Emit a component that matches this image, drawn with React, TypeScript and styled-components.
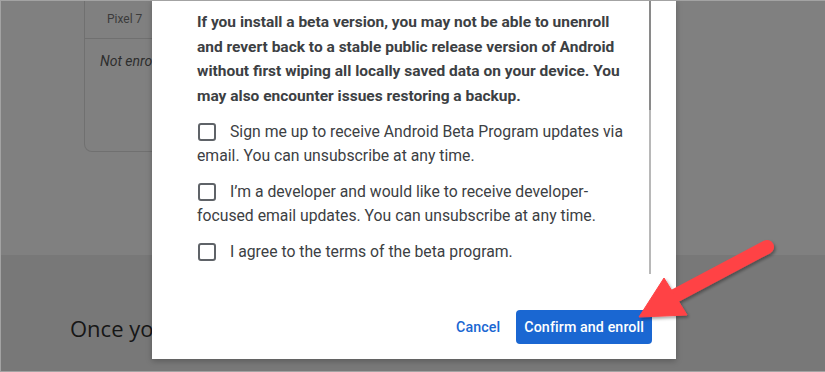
import React from 'react';
import styled, { createGlobalStyle } from 'styled-components';

const Global = createGlobalStyle`
  html, body {
    margin: 0;
    padding: 0;
  }
  body {
    font-family: Roboto, 'Liberation Sans', sans-serif;
  }
`;

// whole screenshot, dimmed page behind the modal
const Frame = styled.div`
  position: relative;
  width: 825px;
  height: 372px;
  box-sizing: border-box;
  overflow: hidden;
  border-top: 1px solid #a3a3a3;
  border-left: 1px solid #a3a3a3;
  border-bottom: 1px solid #a3a3a3;
  display: flex;
  flex-direction: column;
  background: #787878;
`;

const TopSection = styled.div`
  height: 254px;
  background: #808080;
  padding-left: 83px;
  box-sizing: border-box;
`;

const DeviceCard = styled.div`
  width: 200px;
  height: 152px;
  margin-top: -1px;
  border: 1px solid #707070;
  border-top: none;
  border-radius: 0 0 8px 8px;
  box-sizing: border-box;
`;

const CardHead = styled.div`
  height: 38px;
  border-bottom: 1px solid #707070;
  display: flex;
  align-items: center;
  padding-left: 22px;
  font-size: 12px;
  color: #3b3b3b;
`;

const CardBody = styled.div`
  padding: 14px 0 0 15px;
  font-size: 14px;
  font-style: italic;
  color: #2e2e2e;
`;

const BottomSection = styled.div`
  flex: 1;
  padding: 58px 0 0 69px;
`;

const Heading = styled.h2`
  margin: 0;
  font-family: 'Open Sans', Roboto, sans-serif;
  font-weight: 400;
  font-size: 22px;
  color: #161616;
`;

// the modal dialog
const Dialog = styled.div`
  position: absolute;
  left: 151px;
  top: -1px;
  width: 524px;
  height: 359px;
  background: #fff;
  box-shadow: 0 2px 6px rgba(0, 0, 0, 0.25);
  display: flex;
  flex-direction: column;
`;

const ScrollArea = styled.div`
  height: 274px;
  display: flex;
`;

const Content = styled.div`
  width: 497px;
  box-sizing: border-box;
  padding: 10px 18px 0 45px;
`;

const Track = styled.div`
  width: 2px;
  background: #b8b8b8;
  display: flex;
  flex-direction: column;
`;

const Thumb = styled.div`
  height: 110px;
  background: #8a8a8a;
`;

const Warning = styled.p`
  margin: 0 0 12px;
  font-size: 15.5px;
  line-height: 24.5px;
  font-weight: 700;
  color: #3c4043;
`;

const Option = styled.label`
  display: block;
  margin: 0 0 12px;
  font-size: 15.75px;
  line-height: 24px;
  color: #3c4043;
`;

const Box = styled.span`
  display: inline-block;
  width: 18px;
  height: 18px;
  box-sizing: border-box;
  border: 2px solid #5f6368;
  border-radius: 3px;
  margin: 0 14px 0 1px;
  vertical-align: -4px;
`;

const Footer = styled.div`
  flex: 1;
  display: flex;
  justify-content: flex-end;
  align-items: flex-start;
  gap: 16px;
  padding: 36px 24px 0 0;
`;

const TextButton = styled.button<{ $primary?: boolean }>`
  height: 34px;
  border: none;
  border-radius: 4px;
  padding: 0 ${(p) => (p.$primary ? '8px' : '0')};
  font-family: Roboto, sans-serif;
  font-size: 14.25px;
  font-weight: 500;
  letter-spacing: 0.1px;
  cursor: pointer;
  background: ${(p) => (p.$primary ? '#1a67d2' : 'transparent')};
  color: ${(p) => (p.$primary ? '#fff' : '#1a67d2')};
`;

const ArrowSvg = styled.svg`
  position: absolute;
  left: 0;
  top: 0;
  pointer-events: none;
`;

const Arrow = () => (
  <ArrowSvg width="825" height="372" viewBox="0 0 825 372">
    <defs>
      <filter id="sh" x="-20%" y="-20%" width="140%" height="140%">
        <feDropShadow dx="1.5" dy="2" stdDeviation="1.5" floodColor="#000" floodOpacity="0.35" />
      </filter>
    </defs>
    <g filter="url(#sh)" fill="#ff4245" stroke="#ff4245">
      <line x1="766" y1="246" x2="668" y2="298" strokeWidth="14" strokeLinecap="round" />
      <polygon points="638,316 663,277 686,314" strokeWidth="1" strokeLinejoin="round" />
    </g>
  </ArrowSvg>
);

const options = [
  'Sign me up to receive Android Beta Program updates via email. You can unsubscribe at any time.',
  'I\u2019m a developer and would like to receive developer-focused email updates. You can unsubscribe at any time.',
  'I agree to the terms of the beta program.',
];

export default function App() {
  return (
    <>
      <Global />
      <Frame>
        <TopSection>
          <DeviceCard>
            <CardHead>Pixel 7</CardHead>
            <CardBody>Not enrolled</CardBody>
          </DeviceCard>
        </TopSection>
        <BottomSection>
          <Heading>Once you enroll</Heading>
        </BottomSection>

        <Dialog>
          <ScrollArea>
            <Content>
              <Warning>
                If you install a beta version, you may not be able to unenroll and revert back to a
                stable public release version of Android without first wiping all locally saved data
                on your device. You may also encounter issues restoring a backup.
              </Warning>
              {options.map((o) => (
                <Option key={o}>
                  <Box />
                  {o}
                </Option>
              ))}
            </Content>
            <Track>
              <Thumb />
            </Track>
          </ScrollArea>
          <Footer>
            <TextButton>Cancel</TextButton>
            <TextButton $primary>Confirm and enroll</TextButton>
          </Footer>
        </Dialog>

        <Arrow />
      </Frame>
    </>
  );
}
